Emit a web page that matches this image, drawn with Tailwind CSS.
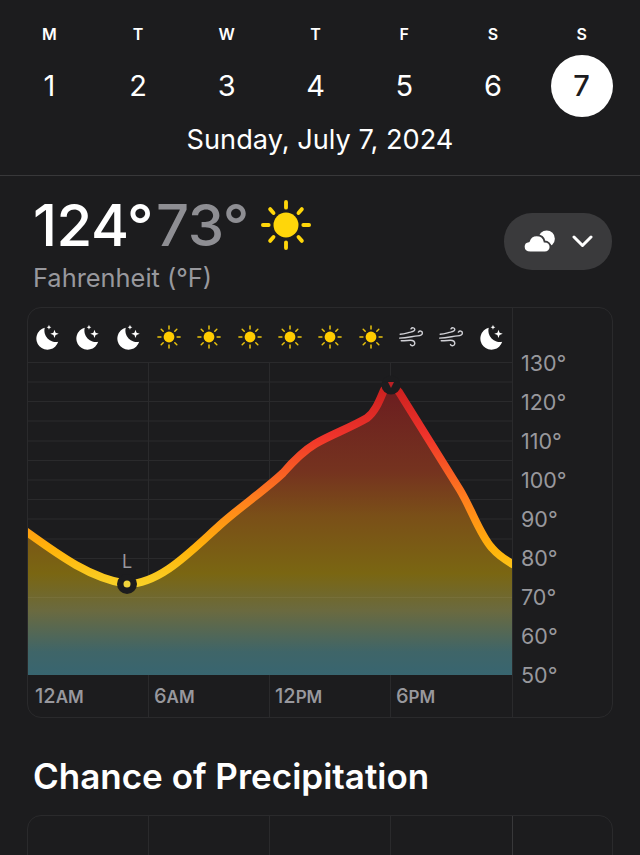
<!DOCTYPE html>
<html lang="en">
  <head>
    <meta charset="UTF-8" />
    <meta name="viewport" content="width=device-width, initial-scale=1.0" />
    <script src="https://cdn.jsdelivr.net/npm/@tailwindcss/browser@4"></script>
    <title>Temperature</title>
  </head>
  <body class="h-[855px] overflow-hidden bg-[#1c1c1e] font-['Inter','Liberation_Sans',sans-serif] text-white">
    <!-- shared icons -->
    <svg class="absolute h-0 w-0" aria-hidden="true">
      <symbol id="moon" viewBox="0 0 24 24">
        <path fill="#fff" d="M9 3.400A10.300 10.300 0 1 0 21.400 16.400 A10.600 10.600 0 0 1 9 3.400Z" />
        <path fill="#fff" d="M18 5.200l1 2.900 2.900 1-2.900 1-1 2.900-1-2.900-2.900-1 2.900-1ZM12.900.8l.6 1.600 1.600.6-1.600.6-.6 1.600-.6-1.600-1.600-.6 1.600-.6Z" />
      </symbol>
      <symbol id="sun" viewBox="0 0 24 24">
        <circle cx="12" cy="12" r="5.400" fill="#ffcc00" />
        <path stroke="#e8c20e" stroke-width="1.500" stroke-linecap="round" d="M12 .9v3M12 20.100v3M.9 12h3M20.100 12h3M4.200 4.200l2 2M17.800 17.800l2 2M19.800 4.200l-2 2M6.200 17.800l-2 2" />
      </symbol>
      <symbol id="wind" viewBox="0 0 24 24">
        <path fill="none" stroke="#d1d1d6" stroke-width="1.300" stroke-linecap="round" d="M2 9.500C6 9.500 9 8 11.500 7.500C13.500 7 15.500 6.500 15.500 5C15.500 3.500 13 2.800 12 4.500M1.500 13C8 13 13 11.500 18 11C20.500 10.800 22.500 10 22.500 8.200C22.500 6.500 20 5.800 18.800 7.500M3 15.500C7 15.500 9.500 15 11.500 15C14 15 15.500 16.200 15.500 18C15.500 20 12.500 20.800 11.500 19" />
      </symbol>
    </svg>

    <!-- week strip -->
    <section class="border-b border-[#38383a] h-[176px]">
      <div class="grid grid-cols-7 pl-[5px] w-[626px] pt-[24px] text-center">
        <span class="text-[16px] leading-[20px] font-semibold">M</span>
        <span class="text-[16px] leading-[20px] font-semibold">T</span>
        <span class="text-[16px] leading-[20px] font-semibold">W</span>
        <span class="text-[16px] leading-[20px] font-semibold">T</span>
        <span class="text-[16px] leading-[20px] font-semibold">F</span>
        <span class="text-[16px] leading-[20px] font-semibold">S</span>
        <span class="text-[16px] leading-[20px] font-semibold">S</span>
      </div>
      <div class="grid grid-cols-7 pl-[5px] w-[626px] mt-[11px] text-center text-[29px] leading-[62px] h-[62px]">
        <span>1</span>
        <span>2</span>
        <span>3</span>
        <span>4</span>
        <span>5</span>
        <span>6</span>
        <span class="mx-auto h-[62px] w-[62px] rounded-full bg-white text-[#1c1c1e] font-medium">7</span>
      </div>
      <p class="text-center text-[27.200px] leading-[34px] mt-[6px]">Sunday, July 7, 2024</p>
    </section>

    <!-- current temperature -->
    <section class="flex items-start justify-between pl-[33px] pr-[28px] pt-[16px] h-[131px]">
      <div>
        <div class="flex items-center h-[66px] text-[58px] leading-[66px] font-medium tracking-[-0.5px]">
          <span>124°</span>
          <span class="ml-[3px] text-[#8e8e93]">73°</span>
          <svg class="ml-[12px] h-[50px] w-[50px]" viewBox="0 0 52 52">
            <circle cx="26" cy="26" r="13" fill="#ffd60a" />
            <path stroke="#ffd60a" stroke-width="4" stroke-linecap="round" d="M26 2v6M26 44v6M2 26h6M44 26h6M9.500 9.500l3.500 4M39 38.500l3.500 4M42.500 9.500l-3.500 4M13 38.500l-3.500 4" />
          </svg>
        </div>
        <p class="mt-[4px] text-[25.400px] leading-[32px] text-[#98989d]">Fahrenheit (°F)</p>
      </div>
      <div class="mt-[21px] flex h-[57px] w-[108px] items-center justify-center gap-[15px] rounded-[28px] bg-[#3a3a3c]">
        <svg class="h-[23px] w-[34px]" viewBox="0 0 34 24">
          <circle cx="24" cy="9" r="8.500" fill="#fff" />
          <path fill="#fff" stroke="#3a3a3c" stroke-width="2" d="M7 23.500C3 23.500 0 21 0 17.500c0-3.200 2.300-5.500 5.300-5.800C6.500 7.800 9.800 5.500 13.500 5.500c4.300 0 7.500 2.800 8.300 6.500 3.500.1 6.200 2.500 6.200 5.800 0 3.300-2.800 5.700-6 5.700Z" />
        </svg>
        <svg class="h-[13px] w-[21px]" viewBox="0 0 21 13">
          <path fill="none" stroke="#fff" stroke-width="3" stroke-linecap="round" stroke-linejoin="round" d="M2 2l8.500 8.500L19 2" />
        </svg>
      </div>
    </section>

    <!-- temperature chart -->
    <section class="mx-[27px] grid h-[411px] w-[586px] grid-cols-[484px_1fr] rounded-[14px] border border-[#2a2a2c]">
      <div class="flex flex-col">
        <div class="grid h-[54px] grid-cols-12 items-center justify-items-center pt-[3px]">
          <svg class="h-[26px] w-[26px]"><use href="#moon" /></svg>
          <svg class="h-[26px] w-[26px]"><use href="#moon" /></svg>
          <svg class="h-[26px] w-[26px]"><use href="#moon" /></svg>
          <svg class="h-[24px] w-[24px]"><use href="#sun" /></svg>
          <svg class="h-[24px] w-[24px]"><use href="#sun" /></svg>
          <svg class="h-[24px] w-[24px]"><use href="#sun" /></svg>
          <svg class="h-[24px] w-[24px]"><use href="#sun" /></svg>
          <svg class="h-[24px] w-[24px]"><use href="#sun" /></svg>
          <svg class="h-[24px] w-[24px]"><use href="#sun" /></svg>
          <svg class="h-[26px] w-[26px]"><use href="#wind" /></svg>
          <svg class="h-[26px] w-[26px]"><use href="#wind" /></svg>
          <svg class="h-[26px] w-[26px]"><use href="#moon" /></svg>
        </div>
        <!-- svg coordinates are page pixels, shifted by the viewBox -->
        <svg class="block h-[314px] w-[484px]" viewBox="28 362 484 314">
          <defs>
            <linearGradient id="area" gradientUnits="userSpaceOnUse" x1="0" y1="385" x2="0" y2="675">
              <stop offset="0" stop-color="#6b1c20" />
              <stop offset="0.3" stop-color="#75331f" />
              <stop offset="0.45" stop-color="#7a4f18" />
              <stop offset="0.65" stop-color="#7a6612" />
              <stop offset="0.78" stop-color="#6a6a40" />
              <stop offset="0.92" stop-color="#3f6568" />
              <stop offset="1" stop-color="#386570" />
            </linearGradient>
            <linearGradient id="line" gradientUnits="userSpaceOnUse" x1="0" y1="385" x2="0" y2="590">
              <stop offset="0" stop-color="#c9201f" />
              <stop offset="0.25" stop-color="#f0332b" />
              <stop offset="0.55" stop-color="#ff7d1e" />
              <stop offset="0.8" stop-color="#ffb30a" />
              <stop offset="1" stop-color="#f8d52a" />
            </linearGradient>
          </defs>
          <g stroke="#2a2a2c" stroke-width="1">
            <path d="M27 362.500H512M27 382H512M27 401.500H512M27 421H512M27 441H512M27 460.500H512M27 480H512M27 499.500H512M27 519H512M27 539H512M27 558.500H512" />
            <path d="M148.500 362V676M269.500 362V676M390.500 362V676" />
          </g>
          <path fill="url(#area)" d="M24 530C60 556 90 578 127 584C160 584 190 552 220 525C240 507 265 490 283 473C296 458 305 450 315 444C330 435 350 428 367 418C375 412 379 402 384 390L391 386L399 392L460 490C472 510 480 535 492 548C498 555 505 560 516 566V675H24Z" />
          <path d="M27 597.500H512" stroke="#ffffff" stroke-opacity="0.05" />
          <path fill="none" stroke="url(#line)" stroke-width="8" stroke-linejoin="round" d="M24 530C60 556 90 578 127 584C160 584 190 552 220 525C240 507 265 490 283 473C296 458 305 450 315 444C330 435 350 428 367 418C375 412 379 402 384 390L391 384L399 392L460 490C472 510 480 535 492 548C498 555 505 560 516 566" />
          <circle cx="127" cy="584" r="10" fill="#1c1c1e" />
          <circle cx="127" cy="584" r="3.500" fill="#f2d43c" />
          <text x="127" y="568" text-anchor="middle" font-size="18" fill="#98989d">L</text>
          <circle cx="391" cy="385" r="9.500" fill="#1c1c1e" />
          <path d="M388 382h6l-3 6Z" fill="#b92025" />
        </svg>
        <div class="grid flex-1 grid-cols-[120px_121px_121px_1fr] text-[20px] font-medium text-[#98989d]">
          <div class="pl-[7px] pt-[8px] leading-[24px]">12<span class="text-[17px] font-semibold">AM</span></div>
          <div class="border-l border-[#2a2a2c] pl-[5px] pt-[8px] leading-[24px]">6<span class="text-[17px] font-semibold">AM</span></div>
          <div class="border-l border-[#2a2a2c] pl-[5px] pt-[8px] leading-[24px]">12<span class="text-[17px] font-semibold">PM</span></div>
          <div class="border-l border-[#2a2a2c] pl-[5px] pt-[8px] leading-[24px]">6<span class="text-[17px] font-semibold">PM</span></div>
        </div>
      </div>
      <div class="border-l border-[#2a2a2c] pl-[8px] pt-[36px] text-[21.500px] text-[#98989d]">
        <div class="flex h-[39px] items-center">130°</div>
        <div class="flex h-[39px] items-center">120°</div>
        <div class="flex h-[39px] items-center">110°</div>
        <div class="flex h-[39px] items-center">100°</div>
        <div class="flex h-[39px] items-center">90°</div>
        <div class="flex h-[39px] items-center">80°</div>
        <div class="flex h-[39px] items-center">70°</div>
        <div class="flex h-[39px] items-center">60°</div>
        <div class="flex h-[39px] items-center">50°</div>
      </div>
    </section>

    <!-- next section, cut off by the window -->
    <h2 class="mt-[36px] pl-[33px] text-[35px] leading-[44px] font-semibold">Chance of Precipitation</h2>
    <div class="mx-[27px] mt-[17px] grid h-[200px] w-[586px] grid-cols-[120px_121px_121px_122px_1fr] rounded-t-[14px] border border-[#2a2a2c]">
      <div></div>
      <div class="border-l border-[#2a2a2c]"></div>
      <div class="border-l border-[#2a2a2c]"></div>
      <div class="border-l border-[#2a2a2c]"></div>
      <div class="border-l border-[#38383a]"></div>
    </div>
  </body>
</html>
